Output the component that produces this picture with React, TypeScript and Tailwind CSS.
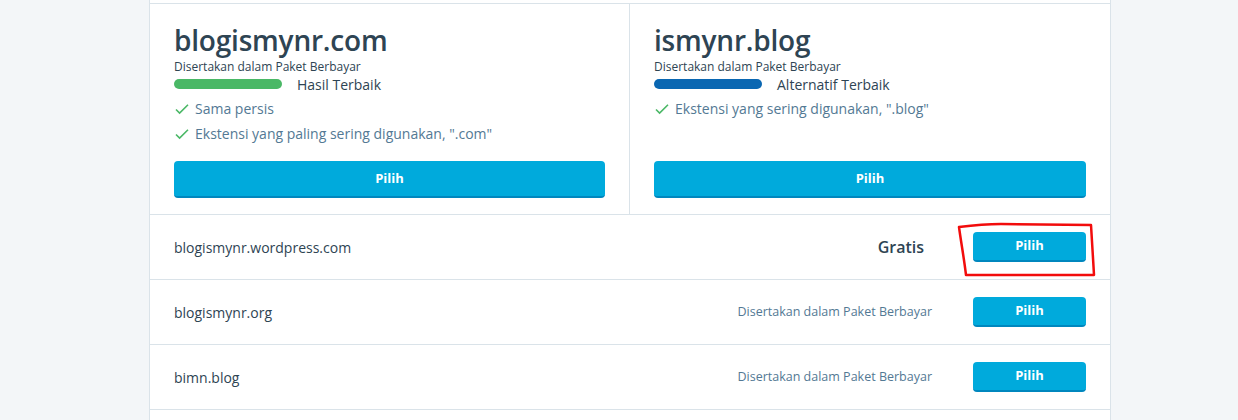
import React from 'react';

type Suggestion = {
  domain: string;
  bar: string;
  label: string;
  checks: string[];
};

const featured: Suggestion[] = [
  {
    domain: 'blogismynr.com',
    bar: 'bg-[#4ab866]',
    label: 'Hasil Terbaik',
    checks: ['Sama persis', 'Ekstensi yang paling sering digunakan, ".com"'],
  },
  {
    domain: 'ismynr.blog',
    bar: 'bg-[#0a67b2]',
    label: 'Alternatif Terbaik',
    checks: ['Ekstensi yang sering digunakan, ".blog"'],
  },
];

const rows = [
  { domain: 'blogismynr.wordpress.com', price: 'Gratis', free: true },
  { domain: 'blogismynr.org', price: 'Disertakan dalam Paket Berbayar', free: false },
  { domain: 'bimn.blog', price: 'Disertakan dalam Paket Berbayar', free: false },
];

function Check() {
  return (
    <svg width="16" height="16" viewBox="0 0 16 16" className="shrink-0">
      <path d="M2 8.5l3.6 3.6L14 3.8" fill="none" stroke="#4ab866" strokeWidth="1.6" />
    </svg>
  );
}

function PilihButton({ wide }: { wide?: boolean }) {
  return (
    <button
      className={
        'rounded-[4px] bg-[#00aadc] border-b-2 border-[#0087be] text-white font-bold text-[13px] ' +
        (wide ? 'w-full h-[37px]' : 'w-[113px] h-[30px]')
      }
    >
      Pilih
    </button>
  );
}

function Scribble() {
  return (
    <svg
      className="absolute left-[-18px] top-[-12px] pointer-events-none"
      width="146"
      height="62"
      viewBox="0 0 146 62"
    >
      <path
        d="M4 7 C20 5 34 4 46 4 L136 5 C137 20 138 38 139 55 L11 55 C9 38 6 22 4 7 Z"
        fill="none"
        stroke="#f20c0c"
        strokeWidth="2.5"
        strokeLinejoin="round"
      />
    </svg>
  );
}

export default function App() {
  return (
    <div
      className="min-h-screen bg-[#f3f6f8] text-[#2e4453]"
      style={{ fontFamily: '"Open Sans", "Noto Sans", sans-serif' }}
    >
      <div className="ml-[149px] w-[962px] bg-white border-x border-[#dae3e9]">
        <div className="h-[3px]" />
        <div className="grid grid-cols-2 border-y border-[#dae3e9]">
          {featured.map((s, i) => (
            <div
              key={s.domain}
              className={
                'flex flex-col px-6 pt-[18px] pb-4 h-[210px] ' +
                (i === 0 ? 'border-r border-[#dae3e9]' : '')
              }
            >
              <h2 className="text-[28px] font-semibold leading-[37px] tracking-[-0.2px]">
                {s.domain}
              </h2>
              <p className="text-[12px] leading-[14px] mt-[1px]">Disertakan dalam Paket Berbayar</p>
              <div className="flex items-center h-[20px]">
                <span className={'w-[108px] h-[10px] rounded-full ' + s.bar} />
                <span className="ml-[15px] text-[14px]">{s.label}</span>
              </div>
              <ul className="mt-[2px]">
                {s.checks.map((c) => (
                  <li key={c} className="flex items-center gap-[5px] h-[25px] text-[14px] text-[#537994]">
                    <Check />
                    {c}
                  </li>
                ))}
              </ul>
              <div className="mt-auto">
                <PilihButton wide />
              </div>
            </div>
          ))}
        </div>
        {rows.map((r) => (
          <div
            key={r.domain}
            className="flex items-center h-[65px] px-6 border-b border-[#dae3e9]"
          >
            <span className="text-[14px]">{r.domain}</span>
            <span
              className={
                'ml-auto ' +
                (r.free
                  ? 'text-[16px] font-semibold mr-[49px]'
                  : 'text-[12.5px] text-[#537994] mr-[41px]')
              }
            >
              {r.price}
            </span>
            <div className="relative">
              <PilihButton />
              {r.free && <Scribble />}
            </div>
          </div>
        ))}
        <div className="h-[10px]" />
      </div>
    </div>
  );
}
